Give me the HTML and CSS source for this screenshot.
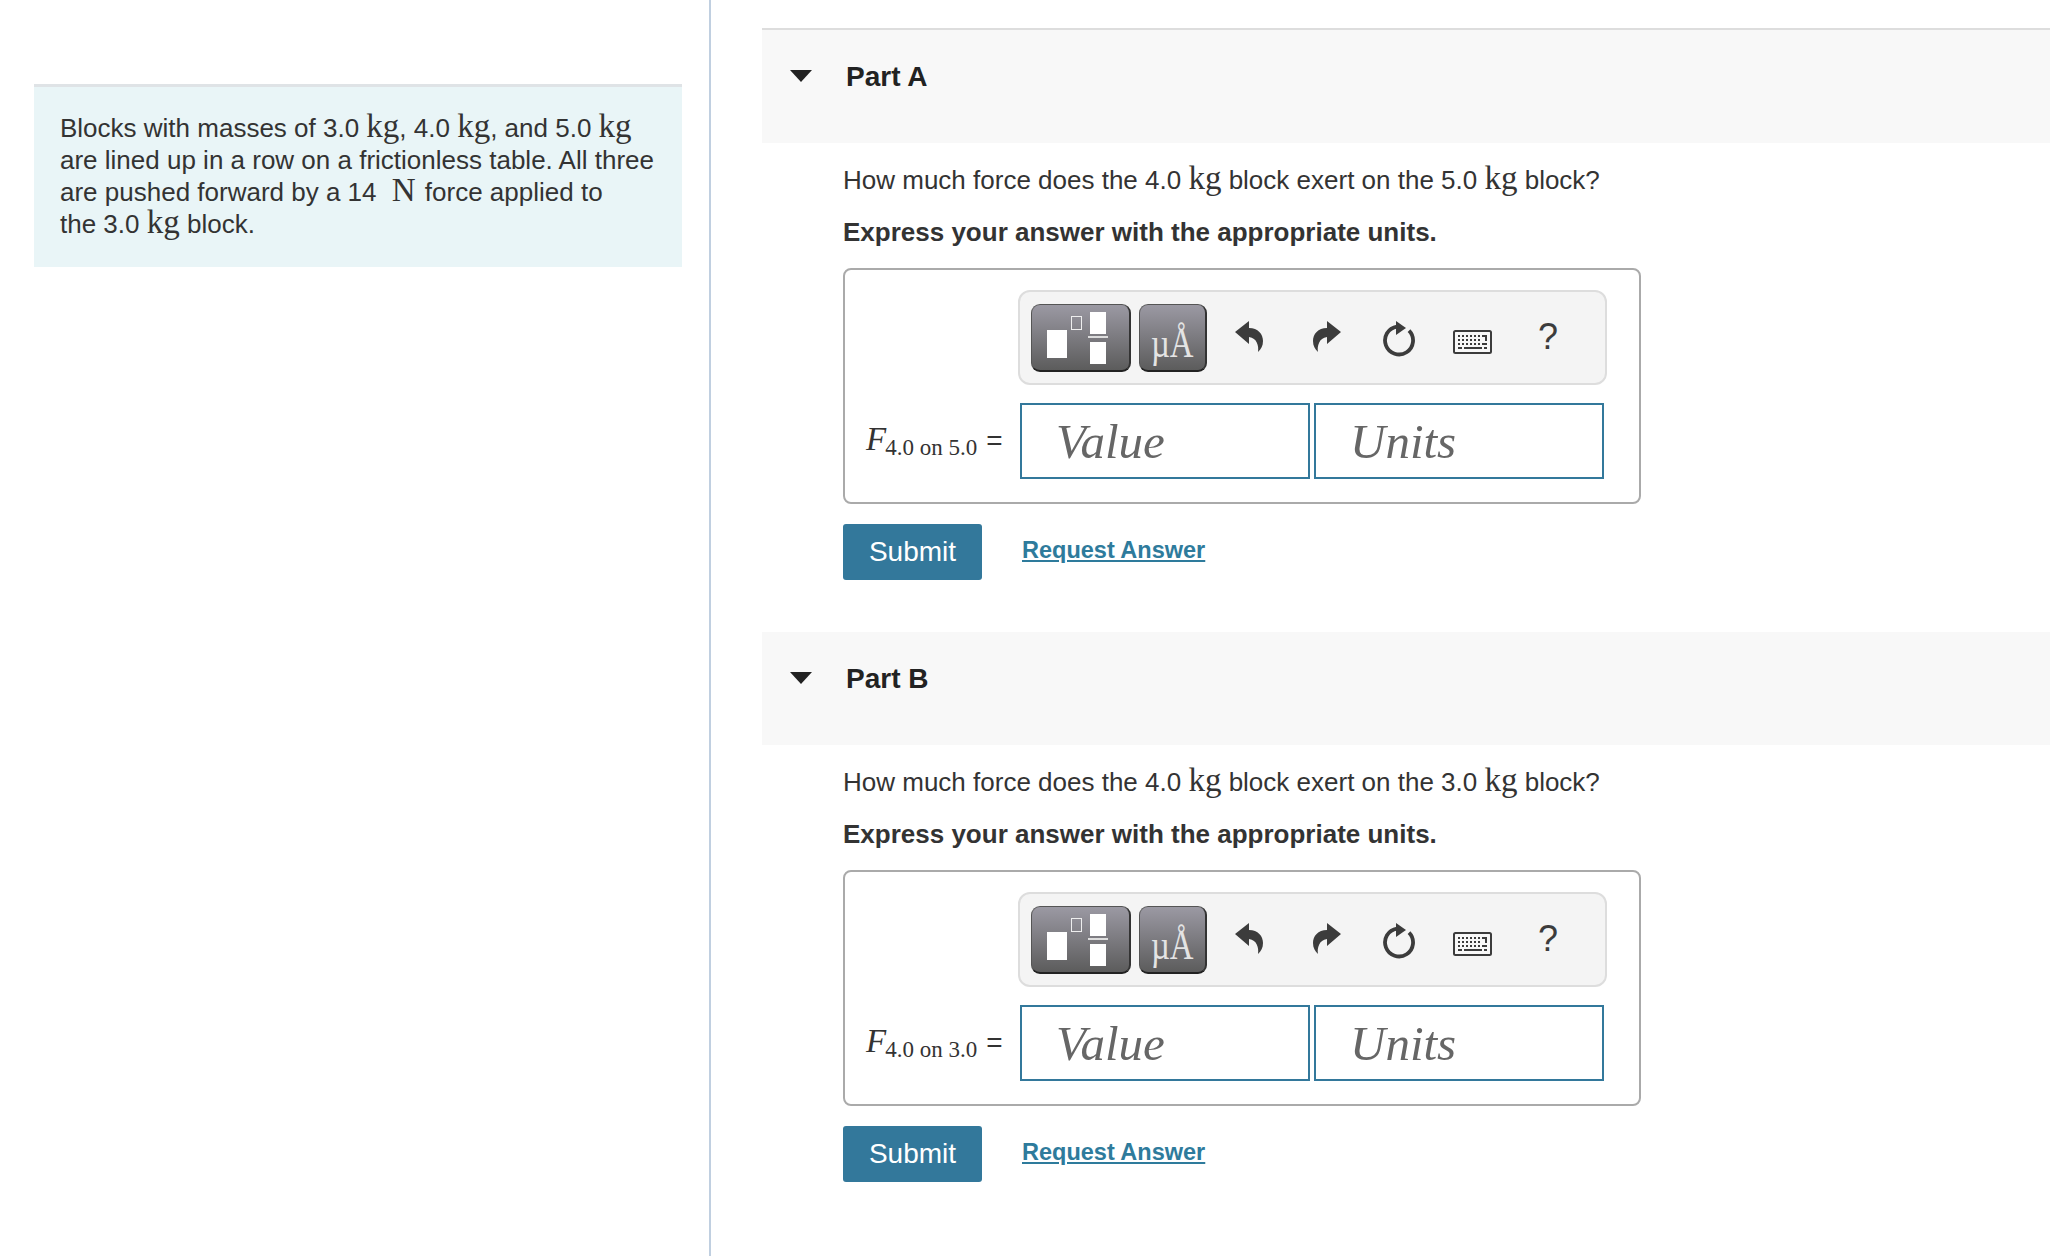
FILE: index.html
```html
<!DOCTYPE html>
<html lang="en">
<head>
    <meta charset="UTF-8">
    <title>Parts A and B</title>
    <link rel="stylesheet" href="styles.css">
</head>
<body>
    <svg class="sprite" xmlns="http://www.w3.org/2000/svg">
        <symbol id="arrow" viewBox="0 0 28 31">
            <path d="M0 11 14 0V7C23 7 28 13 28 20 28 25 26 28 23 31 24 25 22 17 14 16V23Z"/>
        </symbol>
        <symbol id="reset" viewBox="0 0 34 36">
            <path d="M27 9.600A14 14 0 1 1 15 5.600" fill="none" stroke="currentColor" stroke-width="3.800"/>
            <path d="M14 0 24 7 14 14Z"/>
        </symbol>
        <symbol id="keyboard" viewBox="0 0 39 24">
            <rect x="1" y="1" width="37" height="22" rx="1.500" fill="#f8f8f8" stroke="currentColor" stroke-width="2"/>
            <path d="M5 5h2v2H5zM9 5h2v2H9zM13 5h2v2h-2zM17 5h2v2h-2zM21 5h2v2h-2zM25 5h2v2h-2zM29 5h5v6h-2V7h-3zM5 9h2v2H5zM9 9h2v2H9zM13 9h2v2h-2zM17 9h2v2h-2zM21 9h2v2h-2zM25 9h2v2h-2zM5 13h2v2H5zM9 13h2v2H9zM13 13h2v2h-2zM17 13h2v2h-2zM21 13h2v2h-2zM25 13h2v2h-2zM29 13h5v2h-5zM5 17h4v2H5zM11 17h18v2H11zM31 17h3v2h-3z"/>
        </symbol>
    </svg>

    <div class="page">
        <div class="left">
            <div class="intro">
                Blocks with masses of 3.0 <span class="math">kg</span>, 4.0 <span class="math">kg</span>, and 5.0 <span class="math">kg</span><br>
                are lined up in a row on a frictionless table. All three<br>
                are pushed forward by a 14 <span class="math math-n">N</span> force applied to<br>
                the 3.0 <span class="math">kg</span> block.
            </div>
        </div>

        <div class="right">
            <div class="part part-first">
                <div class="part-head">
                    <span class="caret"></span>
                    <h2>Part A</h2>
                </div>
                <div class="part-body">
                    <p class="question">How much force does the 4.0 <span class="math">kg</span> block exert on the 5.0 <span class="math">kg</span> block?</p>
                    <p class="hint">Express your answer with the appropriate units.</p>
                    <div class="answer">
                        <div class="toolbar">
                            <button class="tpl tpl-frac" aria-label="Templates">
                                <span class="sq-big"></span>
                                <span class="sq-small"></span>
                                <span class="frac"><span></span><span class="bar"></span><span></span></span>
                            </button>
                            <button class="tpl tpl-unit"><span>µÅ</span></button>
                            <div class="tool tool-undo"><svg width="28" height="31"><use href="#arrow"/></svg></div>
                            <div class="tool tool-redo"><svg class="flip" width="28" height="31"><use href="#arrow"/></svg></div>
                            <div class="tool tool-reset"><svg width="34" height="36"><use href="#reset"/></svg></div>
                            <div class="tool tool-keys"><svg width="39" height="24"><use href="#keyboard"/></svg></div>
                            <div class="tool tool-help">?</div>
                        </div>
                        <div class="entry">
                            <div class="label"><i>F</i><sub>4.0 on 5.0</sub><span class="eq">=</span></div>
                            <input class="field" type="text" placeholder="Value">
                            <input class="field" type="text" placeholder="Units">
                        </div>
                    </div>
                    <div class="actions">
                        <button class="submit">Submit</button>
                        <a class="request" href="#">Request Answer</a>
                    </div>
                </div>
            </div>

            <div class="part">
                <div class="part-head">
                    <span class="caret"></span>
                    <h2>Part B</h2>
                </div>
                <div class="part-body">
                    <p class="question">How much force does the 4.0 <span class="math">kg</span> block exert on the 3.0 <span class="math">kg</span> block?</p>
                    <p class="hint">Express your answer with the appropriate units.</p>
                    <div class="answer">
                        <div class="toolbar">
                            <button class="tpl tpl-frac" aria-label="Templates">
                                <span class="sq-big"></span>
                                <span class="sq-small"></span>
                                <span class="frac"><span></span><span class="bar"></span><span></span></span>
                            </button>
                            <button class="tpl tpl-unit"><span>µÅ</span></button>
                            <div class="tool tool-undo"><svg width="28" height="31"><use href="#arrow"/></svg></div>
                            <div class="tool tool-redo"><svg class="flip" width="28" height="31"><use href="#arrow"/></svg></div>
                            <div class="tool tool-reset"><svg width="34" height="36"><use href="#reset"/></svg></div>
                            <div class="tool tool-keys"><svg width="39" height="24"><use href="#keyboard"/></svg></div>
                            <div class="tool tool-help">?</div>
                        </div>
                        <div class="entry">
                            <div class="label"><i>F</i><sub>4.0 on 3.0</sub><span class="eq">=</span></div>
                            <input class="field" type="text" placeholder="Value">
                            <input class="field" type="text" placeholder="Units">
                        </div>
                    </div>
                    <div class="actions">
                        <button class="submit">Submit</button>
                        <a class="request" href="#">Request Answer</a>
                    </div>
                </div>
            </div>
        </div>
    </div>
</body>
</html>
```

FILE: styles.css
```css
html, body {
    margin: 0;
    padding: 0;
    height: 100%;
    overflow: hidden;
}
body {
    font-family: "Liberation Sans", Arial, sans-serif;
    font-size: 26px;
    color: #333;
    background-color: #fff;
}
.sprite {
    display: none;
}
.page {
    display: flex;
    height: 1256px;
}
.math {
    font-family: "Liberation Serif", serif;
    font-size: 33px;
    line-height: 0;
}
.math-n {
    margin: 0 2px 0 8px;
}

/* Left panel */
.left {
    width: 711px;
    flex-shrink: 0;
    box-sizing: border-box;
    padding: 84px 27px 0 34px;
    border-right: 2px solid #c0cfe0;
}
.intro {
    height: 183px;
    box-sizing: border-box;
    padding: 25px 26px 0;
    line-height: 32px;
    background-color: #e9f5f7;
    border-top: 3px solid #dfe3e6;
    white-space: nowrap;
}

/* Right panel */
.right {
    flex: 1;
    padding: 28px 0 0 51px;
    min-width: 0;
}
.part-first .part-head {
    border-top: 2px solid #ddd;
    height: 113px;
}
.part-head {
    display: flex;
    align-items: flex-start;
    height: 113px;
    background-color: #f8f8f8;
}
.part {
    margin-bottom: 52px;
}
.caret {
    width: 0;
    height: 0;
    margin: 40px 34px 0 28px;
    border-left: 11px solid transparent;
    border-right: 11px solid transparent;
    border-top: 12px solid #222;
}
h2 {
    margin: 30px 0 0;
    font-size: 28px;
    line-height: 34px;
    font-weight: bold;
    color: #222;
}
.part-body {
    padding-left: 81px;
}
.question {
    margin: 19px 0 0;
    line-height: 36px;
}
.hint {
    margin: 16px 0 0;
    line-height: 36px;
    font-weight: bold;
}

/* Answer box */
.answer {
    width: 798px;
    height: 236px;
    box-sizing: border-box;
    margin-top: 18px;
    padding: 20px 0 0 173px;
    border: 2px solid #aaa;
    border-radius: 8px;
}
.toolbar {
    display: flex;
    align-items: center;
    width: 589px;
    height: 95px;
    box-sizing: border-box;
    padding-left: 11px;
    background-color: #f4f4f4;
    border: 2px solid #ddd;
    border-radius: 12px;
}
.tpl {
    position: relative;
    height: 68px;
    padding: 0;
    background: linear-gradient(#9b99a3, #5c5c5c);
    border: 1px solid #555;
    border-bottom: 2px solid #222;
    border-right: 2px solid #333;
    border-radius: 9px;
    color: #fff;
}
.tpl-frac {
    width: 100px;
    margin-right: 8px;
}
.tpl-unit {
    width: 68px;
    font-family: "Liberation Serif", serif;
    font-size: 42px;
    line-height: 1;
    padding-top: 11px;
    color: #e4e4e4;
    overflow: hidden;
}
.tpl-unit span {
    display: inline-block;
    transform: scaleX(0.78);
}
/* small shapes sit on top of the button face */
.sq-big {
    position: absolute;
    left: 15px;
    top: 25px;
    width: 20px;
    height: 28px;
    background-color: #fff;
}
.sq-small {
    position: absolute;
    left: 39px;
    top: 11px;
    width: 9px;
    height: 12px;
    border: 1.500px solid #eee;
}
.frac {
    position: absolute;
    left: 56px;
    top: 7px;
    width: 20px;
    display: flex;
    flex-direction: column;
    align-items: center;
}
.frac span {
    width: 16px;
    height: 22px;
    background-color: #fff;
}
.frac .bar {
    width: 20px;
    height: 2px;
    margin: 2px 0 4px;
    background-color: #ddd;
}
.tool {
    display: flex;
    justify-content: center;
    align-items: center;
    width: 74px;
    color: #3c3c3c;
    fill: #3c3c3c;
}
.tool-undo {
    margin-left: 5px;
    margin-top: -2px;
}
.tool-redo {
    margin-left: 4px;
    margin-top: -2px;
}
.tool-reset {
    margin: 2px 2px 0 -2px;
}
.tool-keys {
    margin: 8px 3px 0 -3px;
}
.tool-help {
    font-size: 36px;
    margin: -1px 0 0 -1px;
}
.flip {
    transform: scaleX(-1);
}
.entry {
    display: flex;
    align-items: center;
    margin: 18px 0 0 -152px;
}
.label {
    width: 138px;
    margin-right: 16px;
    font-family: "Liberation Serif", serif;
    font-size: 23px;
    white-space: nowrap;
    position: relative;
    top: -2px;
}
.label i {
    font-size: 33px;
}
.label sub {
    font-size: 23px;
    vertical-align: -5px;
    line-height: 0;
    margin-left: -1px;
}
.eq {
    margin-left: 9px;
    font-family: "Liberation Sans", sans-serif;
    font-size: 28px;
}
.field {
    width: 290px;
    height: 76px;
    box-sizing: border-box;
    margin: 0 4px 0 0;
    padding: 0 0 0 34px;
    border: 2px solid #33789b;
    border-radius: 0;
    background-color: #fff;
    font-family: "Liberation Serif", serif;
    font-style: italic;
    font-size: 49px;
    outline: none;
}
.field::placeholder {
    color: #666;
    opacity: 1;
}
.actions {
    display: flex;
    align-items: center;
    margin-top: 20px;
}
.submit {
    width: 139px;
    height: 56px;
    padding: 0;
    border: none;
    border-radius: 3px;
    background-color: #33789b;
    color: #fff;
    font-family: "Liberation Sans", sans-serif;
    font-size: 28px;
}
.request {
    margin: -3px 0 0 40px;
    color: #2e7b9c;
    font-size: 23.500px;
    font-weight: bold;
}
```
